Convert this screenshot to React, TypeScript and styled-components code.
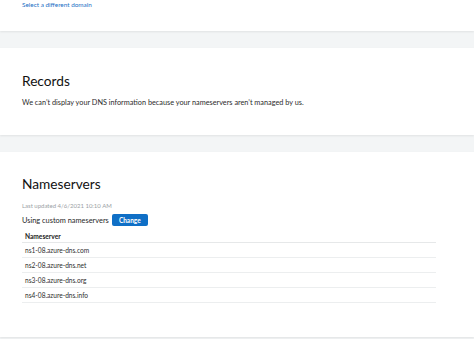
import React from 'react'
import styled, { createGlobalStyle } from 'styled-components'

const GlobalStyle = createGlobalStyle`
  html, body {
    margin: 0;
    padding: 0;
    background: #f3f5f6;
    font-family: Lato, "Noto Sans", Arial, sans-serif;
    color: #1a1a1a;
  }
`

const nameservers = [
  'ns1-08.azure-dns.com',
  'ns2-08.azure-dns.net',
  'ns3-08.azure-dns.org',
  'ns4-08.azure-dns.info',
]

export default function App() {
  return (
    <>
      <GlobalStyle />
      <Div_Page>
        <Section_Card $top={0} $bottom={22}>
          <A_Link href='#'>Select a different domain</A_Link>
        </Section_Card>

        <Section_Card $top={24} $bottom={27}>
          <H2_Title>Records</H2_Title>
          <P_Body>
            We can’t display your DNS information because your nameservers aren’t managed by us.
          </P_Body>
        </Section_Card>

        <Section_Card $top={23} $bottom={34}>
          <H2_Title>Nameservers</H2_Title>
          <P_Muted>Last updated 4/6/2021 10:10 AM</P_Muted>
          <Div_UsingRow>
            <span>Using custom nameservers</span>
            <Button_Change>Change</Button_Change>
          </Div_UsingRow>
          <Table_Nameservers>
            <thead>
              <tr>
                <Th_Head>Nameserver</Th_Head>
              </tr>
            </thead>
            <tbody>
              {nameservers.map(ns => (
                <tr key={ns}>
                  <Td_Cell>{ns}</Td_Cell>
                </tr>
              ))}
            </tbody>
          </Table_Nameservers>
        </Section_Card>
      </Div_Page>
    </>
  )
}

const Div_Page = styled.div`
  display: flex;
  flex-direction: column;
  gap: 17px;
  min-height: 339px;
`

const Section_Card = styled.section<{ $top: number; $bottom: number }>`
  background: #ffffff;
  padding: ${p => p.$top}px 22px ${p => p.$bottom}px;
  box-shadow: 0 1px 2px rgba(0, 0, 0, 0.08);
`

const A_Link = styled.a`
  display: block;
  font-size: 6.4px;
  line-height: 9px;
  color: #1b6fc4;
  text-decoration: none;
`

const H2_Title = styled.h2`
  margin: 0;
  font-size: 13.7px;
  line-height: 18px;
  font-weight: 400;
  color: #111111;
`

const P_Body = styled.p`
  margin: 8px 0 0;
  font-size: 7.3px;
  line-height: 10px;
  color: #2b2b2b;
`

const P_Muted = styled.p`
  margin: 8px 0 0;
  font-size: 6px;
  line-height: 10px;
  color: #9aa1a5;
`

const Div_UsingRow = styled.div`
  display: flex;
  align-items: center;
  gap: 3px;
  margin-top: 3px;
  height: 12px;
  font-size: 7.4px;
  color: #1f1f1f;
`

const Button_Change = styled.button`
  height: 12px;
  width: 36px;
  padding: 0;
  border: none;
  border-radius: 2px;
  background: #0f6fc6;
  color: #ffffff;
  font-family: inherit;
  font-size: 6.5px;
  font-weight: 700;
`

const Table_Nameservers = styled.table`
  margin-top: 3px;
  width: 414px;
  border-collapse: collapse;
  font-size: 6.6px;
`

const Th_Head = styled.th`
  text-align: left;
  font-weight: 700;
  padding: 0 3px;
  height: 13px;
  border-bottom: 1px solid #e6e8e9;
  color: #222222;
`

const Td_Cell = styled.td`
  padding: 0 3px;
  height: 14px;
  border-bottom: 1px solid #eceeef;
  color: #2e2e2e;
`
